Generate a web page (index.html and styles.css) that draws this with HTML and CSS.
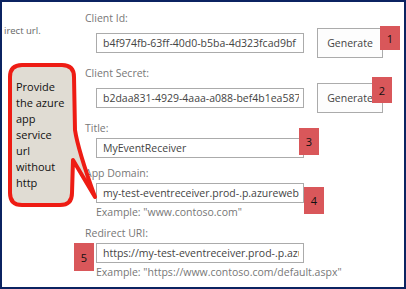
FILE: index.html
```html
<!DOCTYPE html>
<html>
<head>
<meta charset="utf-8">
<link rel="stylesheet" href="styles.css">
</head>
<body>
<div class="frame">
  <div class="side"><span class="cut">irect url.</span></div>
  <div class="form">
    <div class="group">
      <div class="label">Client Id:</div>
      <div class="row">
        <input class="field" type="text" value="b4f974fb-63ff-40d0-b5ba-4d323fcad9bf">
        <button class="btn">Generate</button>
      </div>
    </div>
    <div class="group">
      <div class="label">Client Secret:</div>
      <div class="row">
        <input class="field" type="text" value="b2daa831-4929-4aaa-a088-bef4b1ea5871">
        <button class="btn">Generate</button>
      </div>
    </div>
    <div class="group">
      <div class="label">Title:</div>
      <div class="row">
        <input class="field" type="text" value="MyEventReceiver">
      </div>
    </div>
    <div class="group">
      <div class="label">App Domain:</div>
      <div class="row">
        <input class="field" type="text" value="my-test-eventreceiver.prod-.p.azurewebsites.net">
      </div>
      <div class="example">Example: "www.contoso.com"</div>
    </div>
    <div class="group redirect">
      <div class="label">Redirect URI:</div>
      <div class="row">
        <input class="field" type="text" value="https://my-test-eventreceiver.prod-.p.azurewebsites.net">
      </div>
      <div class="example">Example: "https://www.contoso.com/default.aspx"</div>
    </div>
  </div>

  <svg class="callout" width="406" height="289" viewBox="0 0 406 289">
    <path d="M 22 65 L 62 65 Q 74 65 74 77 L 75 130 Q 78 150 95 197 L 73 160 L 72 193 Q 72 205 60 205 L 22 205 Q 10 205 10 193 L 10 77 Q 10 65 22 65 Z" fill="#e0dcd3" stroke="#ee1c14" stroke-width="4" stroke-linejoin="round"/>
  </svg>
  <div class="callout-text">Provide<br>the azure<br>app<br>service<br>url<br>without<br>http</div>

  <div class="badge b1">1</div>
  <div class="badge b2">2</div>
  <div class="badge b3">3</div>
  <div class="badge b4">4</div>
  <div class="badge b5">5</div>
</div>
</body>
</html>
```
FILE: styles.css
```css
html, body {
  margin: 0;
  padding: 0;
  background: #ffffff;
}
.frame {
  position: relative;
  box-sizing: border-box;
  width: 406px;
  height: 289px;
  border: 2px solid #0b2361;
  background: #ffffff;
  display: flex;
  overflow: hidden;
  font-family: "Open Sans", "Noto Sans", sans-serif;
}
.side {
  width: 83px;
  flex: none;
  padding-top: 22px;
  padding-left: 2px;
  box-sizing: border-box;
}
.cut {
  display: block;
  font-size: 9.5px;
  line-height: 14px;
  color: #666666;
}
.form {
  flex: 1;
  display: flex;
  flex-direction: column;
  padding-top: 9px;
  gap: 8px;
}
.group {
  display: flex;
  flex-direction: column;
}
.redirect {
  margin-top: -1px;
}
.label {
  font-size: 10.5px;
  line-height: 14px;
  color: #777777;
  margin-bottom: 3px;
}
.row {
  display: flex;
  align-items: center;
  margin-left: 11px;
}
.field {
  box-sizing: border-box;
  width: 208px;
  height: 20px;
  margin: 0;
  border: 1px solid #ababab;
  padding: 0 4px 0 6px;
  font-family: "Open Sans", "Noto Sans", sans-serif;
  font-size: 10.5px;
  color: #444444;
  background: #ffffff;
  outline: none;
}
.btn {
  box-sizing: border-box;
  width: 66px;
  height: 30px;
  margin: 0 0 0 13px;
  border: 1px solid #ababab;
  background: #fdfdfd;
  padding: 0;
  font-family: "Open Sans", "Noto Sans", sans-serif;
  font-size: 10.5px;
  color: #444444;
}
.example {
  margin-left: 11px;
  margin-top: 2px;
  font-size: 10.5px;
  line-height: 14px;
  color: #777777;
}
.callout {
  position: absolute;
  left: -2px;
  top: -2px;
  pointer-events: none;
}
.callout-text {
  position: absolute;
  left: 14px;
  top: 77px;
  font-size: 11px;
  line-height: 16px;
  color: #111111;
}
.badge {
  position: absolute;
  width: 20px;
  background: #d9575a;
  color: #111111;
  font-family: "Open Sans", "Noto Sans", sans-serif;
  font-size: 11px;
  display: flex;
  align-items: center;
  justify-content: center;
}
.b1 { left: 378px; top: 24px; height: 24px; }
.b2 { left: 370px; top: 75px; height: 26px; }
.b3 { left: 297px; top: 126px; height: 27px; }
.b4 { left: 302px; top: 185px; height: 27px; }
.b5 { left: 72px; top: 241px; height: 28px; }
```
